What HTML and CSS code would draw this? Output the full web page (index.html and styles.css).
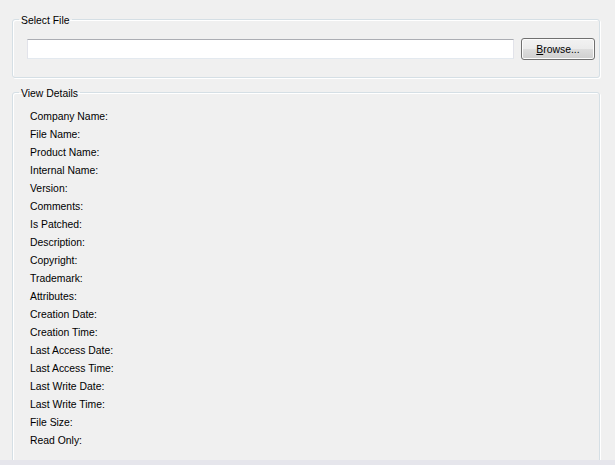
FILE: index.html
```html
<!DOCTYPE html>
<html>
<head>
<meta charset="utf-8">
<link rel="stylesheet" href="styles.css">
</head>
<body>
<div class="window">
  <div class="main">
    <fieldset class="group group-select">
      <legend>Select File</legend>
      <div class="file-row">
        <div class="textbox"></div>
        <button class="btn"><u>B</u>rowse...</button>
      </div>
    </fieldset>
    <fieldset class="group group-details">
      <legend>View Details</legend>
      <ul class="labels">
        <li>Company Name:</li>
        <li>File Name:</li>
        <li>Product Name:</li>
        <li>Internal Name:</li>
        <li>Version:</li>
        <li>Comments:</li>
        <li>Is Patched:</li>
        <li>Description:</li>
        <li>Copyright:</li>
        <li>Trademark:</li>
        <li>Attributes:</li>
        <li>Creation Date:</li>
        <li>Creation Time:</li>
        <li>Last Access Date:</li>
        <li>Last Access Time:</li>
        <li>Last Write Date:</li>
        <li>Last Write Time:</li>
        <li>File Size:</li>
        <li>Read Only:</li>
      </ul>
    </fieldset>
  </div>
  <div class="band"></div>
</div>
</body>
</html>
```
FILE: styles.css
```css
html, body {
  margin: 0;
  padding: 0;
  background: #f0f0f0;
}
body {
  font-family: "Liberation Sans", Arial, sans-serif;
  font-size: 10.4px;
  color: #000;
}
.window {
  width: 615px;
  height: 465px;
  display: flex;
  flex-direction: column;
  overflow: hidden;
}
.main {
  height: 460px;
  overflow: hidden;
  padding: 10px 0 0 12px;
  box-sizing: border-box;
}
.group {
  width: 588px;
  box-sizing: border-box;
  margin: 0;
  border: 1px solid #d5dfe5;
  border-radius: 3px;
  box-shadow: inset 1px 1px 0 #fff, 1px 1px 0 #fff;
  min-width: 0;
}
.group legend {
  padding: 4px 2px 0;
  line-height: 14px;
  font-size: 10.4px;
}
.group-select {
  padding: 10px 4px 17px 14px;
}
.group-select legend {
  margin-left: -8px;
}
.file-row {
  display: flex;
  align-items: center;
  gap: 7px;
}
.textbox {
  width: 487px;
  height: 20px;
  box-sizing: border-box;
  background: #fff;
  border: 1px solid #dbdfe6;
  border-top-color: #abadb3;
  border-left-color: #e2e3ea;
  border-right-color: #e2e3ea;
  border-bottom-color: #e3e9ef;
}
.btn {
  width: 74px;
  height: 22px;
  box-sizing: border-box;
  border: 1px solid #707070;
  border-radius: 3px;
  background: linear-gradient(to bottom, #f2f2f2 0%, #ebebeb 50%, #dddddd 51%, #cfcfcf 100%);
  box-shadow: inset 0 0 0 1px #fcfcfc;
  font-family: "Liberation Sans", Arial, sans-serif;
  font-size: 10.4px;
  color: #000;
  padding: 0;
}
.group-details {
  margin-top: 5px;
  padding: 7px 0 20px 17px;
}
.group-details legend {
  margin-left: -11px;
}
.labels {
  list-style: none;
  margin: 0;
  padding: 0;
}
.labels li {
  line-height: 18px;
  height: 18px;
}
.band {
  height: 5px;
  background: #e6e6ec;
}
```
